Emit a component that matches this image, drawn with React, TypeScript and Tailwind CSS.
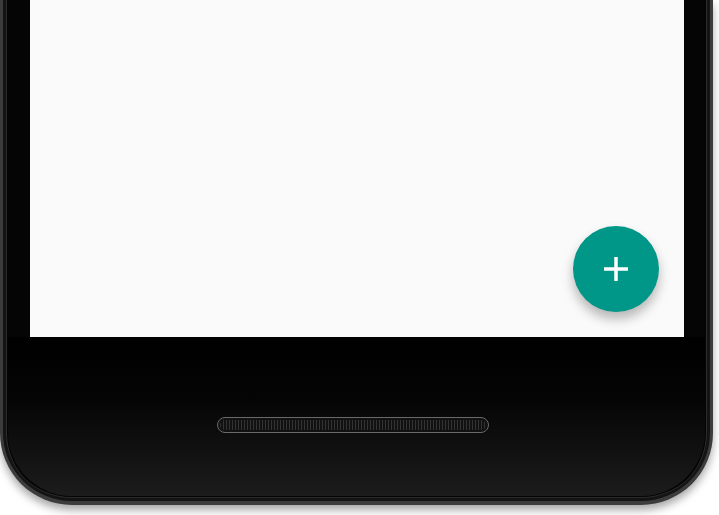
import React from "react";

export default function App() {
  return (
    <div className="w-[719px] h-[515px] bg-white overflow-hidden">
      <div className="relative w-[713px] h-[505px] rounded-b-[72px] bg-[#050505] border-x-[3px] border-b-[4px] border-[#3c3c3c] shadow-[0_5px_9px_rgba(0,0,0,0.35),inset_3px_0_0_#141414,inset_-3px_0_0_#141414,inset_0_-3px_0_#141414,inset_4px_0_0_#2c2c2c,inset_-4px_0_0_#2c2c2c,inset_0_-4px_0_#2a2a2a] flex flex-col overflow-hidden">
        <div className="mx-[5px] flex-1 flex flex-col">
          <div className="relative ml-[22px] w-[654px] h-[337px] bg-[#fafafa] shrink-0">
            <button className="absolute left-[543px] top-[226px] w-[86px] h-[86px] rounded-full bg-[#009688] shadow-[0_7px_12px_rgba(0,0,0,0.28)] flex items-center justify-center">
              <svg width="26" height="26" viewBox="0 0 26 26">
                <rect x="11.25" y="1" width="3.5" height="24" fill="#fff" />
                <rect x="1" y="11.25" width="24" height="3.5" fill="#fff" />
              </svg>
            </button>
          </div>
          <div className="flex-1 mb-[5px] rounded-b-[64px] bg-[linear-gradient(to_bottom,#000_0%,#050505_40%,#1c1c1c_100%)] pl-[209px] pt-[80px]">
            <div className="w-[272px] h-[16px] rounded-full border border-[#6a6a6a] bg-[#111] p-[2px]">
              <div className="w-full h-full rounded-full bg-[repeating-linear-gradient(90deg,#333_0px,#333_1px,#121212_1px,#121212_3px)]" />
            </div>
          </div>
        </div>
      </div>
    </div>
  );
}
